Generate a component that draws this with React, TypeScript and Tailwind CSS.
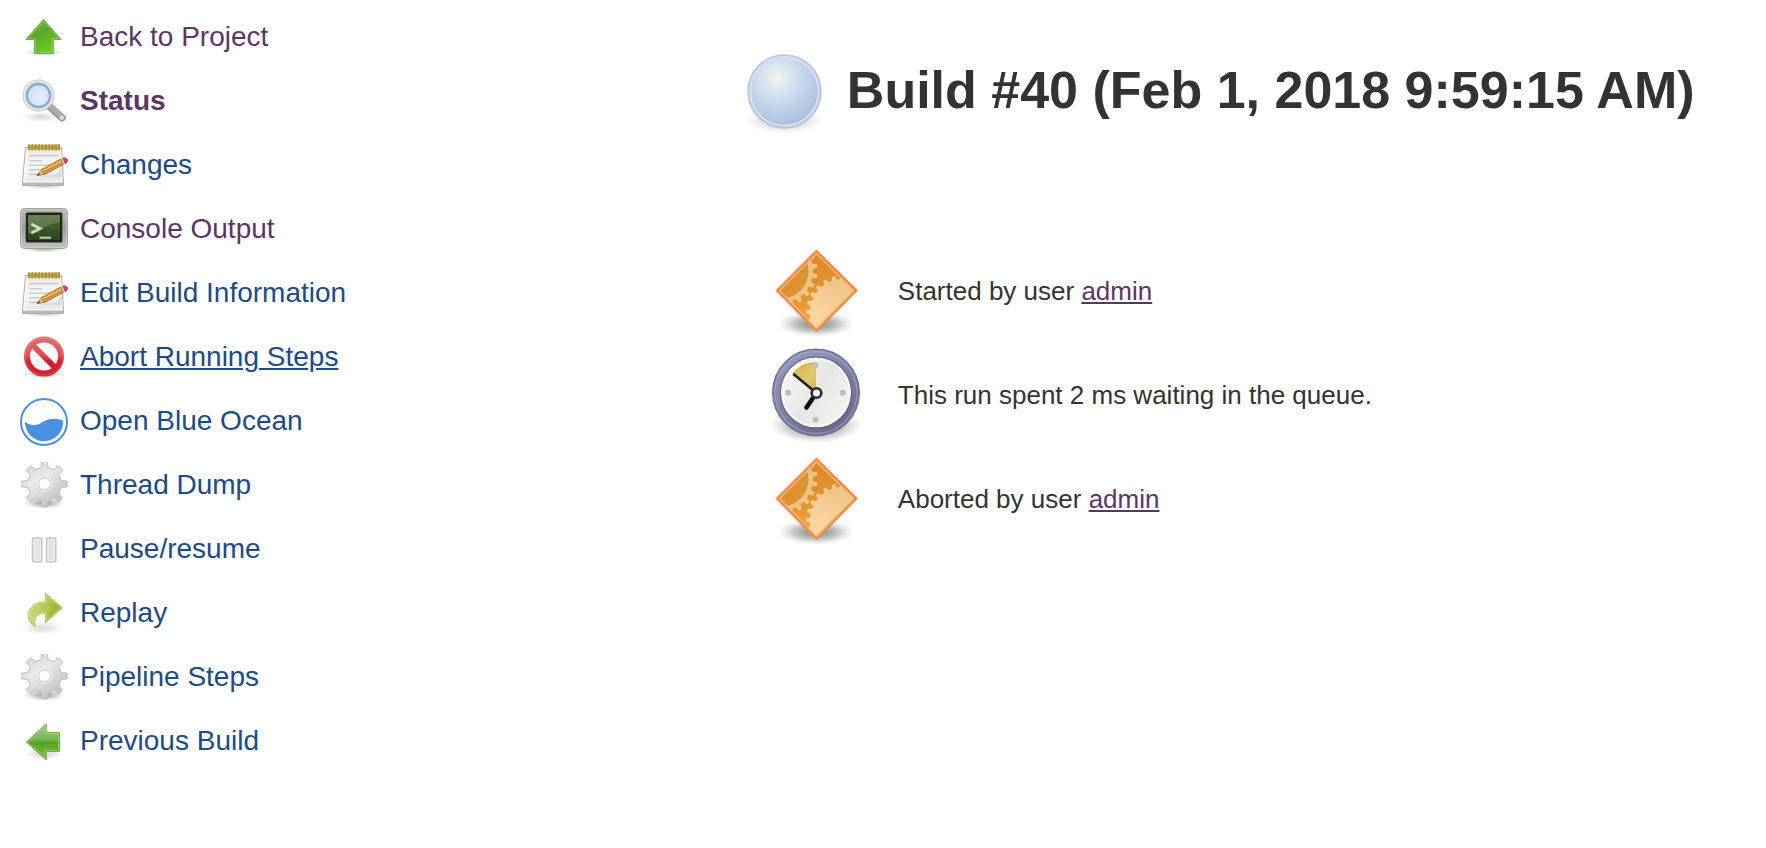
import React from 'react';

type Icon = () => React.ReactElement;

type Task = {
  label: string;
  icon: Icon;
  visited?: boolean;
  active?: boolean;
  hovered?: boolean;
};

type Cause = {
  text: string;
  user?: string;
  icon: Icon;
};

// toothed wheel outline, teeth start at the top
function gearPath(cx: number, cy: number, inner: number, outer: number, teeth: number, base = 0.5, tip = 0.36) {
  const step = (Math.PI * 2) / teeth;
  const point = (r: number, a: number) =>
    `${(cx + r * Math.sin(a)).toFixed(2)} ${(cy - r * Math.cos(a)).toFixed(2)}`;
  const parts: string[] = [];
  for (let i = 0; i < teeth; i++) {
    const a = i * step;
    parts.push(point(inner, a - (step * base) / 2));
    parts.push(point(outer, a - (step * tip) / 2));
    parts.push(point(outer, a + (step * tip) / 2));
    parts.push(point(inner, a + (step * base) / 2));
  }
  return `M${parts.join('L')}Z`;
}

function Shadow({ cx, cy, rx, ry, opacity = 0.4 }: { cx: number; cy: number; rx: number; ry: number; opacity?: number }) {
  return (
    <>
      <defs>
        <radialGradient id="shadow">
          <stop offset="0" stopColor="#000" stopOpacity="0.7" />
          <stop offset="0.5" stopColor="#000" stopOpacity="0.38" />
          <stop offset="0.8" stopColor="#000" stopOpacity="0.12" />
          <stop offset="1" stopColor="#000" stopOpacity="0" />
        </radialGradient>
      </defs>
      <ellipse cx={cx} cy={cy} rx={rx} ry={ry} fill="url(#shadow)" opacity={opacity} />
    </>
  );
}

function SmallIcon({ children }: { children: React.ReactNode }) {
  return (
    <svg viewBox="0 0 48 48" className="size-12 shrink-0" aria-hidden="true">
      {children}
    </svg>
  );
}

function UpIcon() {
  return (
    <SmallIcon>
      <defs>
        <linearGradient id="up" x1="0" y1="0" x2="0.5" y2="1">
          <stop offset="0" stopColor="#8cc063" />
          <stop offset="0.45" stopColor="#5da52a" />
          <stop offset="1" stopColor="#6fcb22" />
        </linearGradient>
      </defs>
      <Shadow cx={24} cy={38.5} rx={20} ry={4} opacity={0.35} />
      <path d="M23.5 5.5L41 25.5H33.3V39.5H14.5V25.5H6Z" fill="url(#up)" stroke="#6aad42" strokeWidth="1" strokeLinejoin="round" />
      <path d="M23.5 7.5L38.5 24.5H32.3V38.5H15.5V24.5H8.3Z" fill="none" stroke="#a5dc7c" strokeOpacity="0.5" />
    </SmallIcon>
  );
}

function SearchIcon() {
  return (
    <SmallIcon>
      <defs>
        <radialGradient id="lens" cx="0.55" cy="0.6" r="0.6">
          <stop offset="0" stopColor="#e8f0fa" />
          <stop offset="0.65" stopColor="#cfdff2" />
          <stop offset="1" stopColor="#a5c3e6" />
        </radialGradient>
      </defs>
      <Shadow cx={21} cy={39} rx={20} ry={5.5} opacity={0.22} />
      <path d="M29.5 28.5L42 39.7" stroke="#9a9a9a" strokeWidth="7.5" strokeLinecap="round" />
      <path d="M30 28L42 39" stroke="#adadad" strokeWidth="4.5" strokeLinecap="round" />
      <circle cx="41.8" cy="39.7" r="2.6" fill="#ddd" stroke="#999" strokeWidth="0.8" />
      <circle cx="18.5" cy="17.5" r="14" fill="url(#lens)" stroke="#c2c2c2" strokeWidth="4" />
      <circle cx="18.5" cy="17.5" r="14" fill="none" stroke="#e5e5e3" strokeWidth="2.4" />
      <circle cx="18.5" cy="17.5" r="11.6" fill="none" stroke="#86abd9" strokeWidth="2.2" />
      <path d="M9 18C9 10 15 7 22 8C27 10 28 13 28 15C21 14 15 19 9 18Z" fill="#fff" opacity="0.15" />
    </SmallIcon>
  );
}

function NotepadIcon() {
  return (
    <SmallIcon>
      <defs>
        <linearGradient id="paper" x1="0" y1="0" x2="0" y2="1">
          <stop offset="0" stopColor="#e8e8e7" />
          <stop offset="0.5" stopColor="#f6f6f5" />
          <stop offset="1" stopColor="#e4e4e2" />
        </linearGradient>
      </defs>
      <Shadow cx={24} cy={43.5} rx={22} ry={3.5} opacity={0.4} />
      <path d="M5.5 5.5H41.5L43.5 40V43.5H2.5V40Z" fill="url(#paper)" stroke="#adadab" strokeLinejoin="round" />
      <path d="M3 40.5H43.2V43H3Z" fill="#b9b9b6" />
      <path d="M6.5 8H40.7L42.3 39.7H3.8Z" fill="none" stroke="#fff" strokeWidth="0.8" />
      <path d="M9.5 13.7H38.5M9.5 18.7H22M9 23.3H33M9 27.8H22M9 32.4H19" stroke="#cdcdcc" strokeWidth="1.6" />
      <path d="M8 3H40V7.8H8Z" fill="#c2a443" />
      <path d="M8.8 2V8.4M12.2 2V8.4M15.6 2V8.4M19 2V8.4M22.4 2V8.4M25.8 2V8.4M29.2 2V8.4M32.6 2V8.4M36 2V8.4M39.2 2V8.4" stroke="#b09439" strokeWidth="1.7" />
      <path d="M18 35L36 32L44 22L42 36Z" fill="#888" opacity="0.18" />
      <path d="M16.8 33.6L22 27.2L24.8 32.4Z" fill="#dcc08a" stroke="#8a642b" strokeWidth="0.7" strokeLinejoin="round" />
      <path d="M16.8 33.6L19 31L20.2 32.9Z" fill="#5c5034" />
      <path d="M22 27.2L40.8 17L43.4 22.5L24.8 32.4Z" fill="#d0943e" stroke="#9c6c26" strokeWidth="0.8" />
      <path d="M22.8 28.8L41.3 18.8" stroke="#ebbd6c" strokeWidth="1.5" />
      <path d="M40.8 17L43 16L45.4 21.4L43.4 22.5Z" fill="#c9c9c9" stroke="#999" strokeWidth="0.5" />
      <path d="M43 16Q46.4 15.1 47.4 17.6T45.4 21.4Z" fill="#dc4545" stroke="#b13f37" strokeWidth="0.7" />
    </SmallIcon>
  );
}

function TerminalIcon() {
  return (
    <SmallIcon>
      <defs>
        <linearGradient id="bezel" x1="0" y1="0" x2="0" y2="1">
          <stop offset="0" stopColor="#b8bab4" />
          <stop offset="0.5" stopColor="#9c9e99" />
          <stop offset="1" stopColor="#c0c2bd" />
        </linearGradient>
        <linearGradient id="screen" x1="0" y1="0" x2="0" y2="1">
          <stop offset="0" stopColor="#4f6a3b" />
          <stop offset="1" stopColor="#2a431c" />
        </linearGradient>
      </defs>
      <Shadow cx={24} cy={42.5} rx={22} ry={4} opacity={0.5} />
      <path d="M4.5 2.5H43.5Q47.2 2.5 47.3 6L47.5 37Q47.5 42.5 43 42.5H5Q0.5 42.5 0.5 37L0.7 6Q0.8 2.5 4.5 2.5Z" fill="url(#bezel)" stroke="#a0a29d" />
      <path d="M4.8 3.6H43.2Q46.1 3.6 46.2 6.3L46.3 37Q46.3 41.3 42.8 41.3H5.2Q1.7 41.3 1.7 37L1.8 6.3Q1.9 3.6 4.8 3.6Z" fill="none" stroke="#d9dbd7" strokeOpacity="0.6" />
      <rect x="5.8" y="6.5" width="36.5" height="30" rx="1.5" fill="#20241d" />
      <rect x="8" y="9" width="32" height="25" fill="url(#screen)" />
      <path d="M8 9H40V16Q26 18 18 27Q13 26 8 28Z" fill="#a6bd8c" opacity="0.3" />
      <path d="M11.3 18L20 22.5L11.3 27" fill="none" stroke="#cfe0cc" strokeWidth="2.6" />
      <path d="M19.5 31.7H31" stroke="#a9c0a3" strokeWidth="2.4" />
      <circle cx="32.8" cy="39" r="1.2" fill="#8fdc50" />
    </SmallIcon>
  );
}

function StopIcon() {
  return (
    <SmallIcon>
      <defs>
        <linearGradient id="stop" gradientUnits="userSpaceOnUse" x1="0" y1="2" x2="0" y2="43">
          <stop offset="0" stopColor="#e67070" />
          <stop offset="0.5" stopColor="#dc4b50" />
          <stop offset="0.6" stopColor="#d5202b" />
          <stop offset="1" stopColor="#d2222c" />
        </linearGradient>
      </defs>
      <Shadow cx={24} cy={40} rx={20} ry={4.5} opacity={0.45} />
      <circle cx="24" cy="22.5" r="16.5" fill="#fff" />
      <path d="M12.5 11L35.5 34" stroke="url(#stop)" strokeWidth="6" />
      <circle cx="24" cy="22.5" r="17" fill="none" stroke="url(#stop)" strokeWidth="6" />
      <circle cx="24" cy="22.5" r="18.6" fill="none" stroke="#fff" strokeWidth="0.8" opacity="0.25" />
    </SmallIcon>
  );
}

function OceanIcon() {
  return (
    <SmallIcon>
      <circle cx="24" cy="24" r="23" fill="#fff" stroke="#4a90e2" strokeWidth="2" />
      <path d="M4.9 23.6C9 27.6 16 28.2 22 24.4C28 20.5 35 19.5 43.1 22.4A19.2 19.2 0 0 1 24 43.2A19.2 19.2 0 0 1 4.9 23.6Z" fill="#4a90e2" />
    </SmallIcon>
  );
}

function GearIcon() {
  return (
    <SmallIcon>
      <defs>
        <linearGradient id="gear" x1="0.1" y1="0" x2="0.8" y2="1">
          <stop offset="0" stopColor="#d2d2d2" />
          <stop offset="0.4" stopColor="#e9e9e9" />
          <stop offset="1" stopColor="#bdbdbd" />
        </linearGradient>
      </defs>
      <Shadow cx={24.5} cy={41} rx={20} ry={6} opacity={0.55} />
      <path
        d={`${gearPath(24.5, 22, 17, 22.8, 8, 0.5, 0.34)}M30.5 22A6 6 0 1 0 18.5 22A6 6 0 1 0 30.5 22Z`}
        fill="url(#gear)"
        fillRule="evenodd"
        stroke="#bababa"
        strokeLinejoin="round"
      />
      <circle cx="24.5" cy="22" r="6" fill="#fff" stroke="#c6c6c6" />
      <circle cx="24.5" cy="22" r="7.3" fill="none" stroke="#efefef" strokeWidth="1.2" />
    </SmallIcon>
  );
}

function PauseIcon() {
  return (
    <SmallIcon>
      <g fill="#e2e4e0" stroke="#c4c6c1" strokeWidth="1.6">
        <rect x="12.6" y="12" width="9.2" height="23.8" rx="1" />
        <rect x="26.6" y="12" width="9.2" height="23.8" rx="1" />
      </g>
      <path d="M14 13.5H20.5V34.5H14ZM28 13.5H34.5V34.5H28Z" fill="none" stroke="#eff0ee" />
    </SmallIcon>
  );
}

function ReplayIcon() {
  return (
    <SmallIcon>
      <defs>
        <linearGradient id="replay" x1="0" y1="0" x2="1" y2="0.2">
          <stop offset="0" stopColor="#cfdc80" />
          <stop offset="0.5" stopColor="#bacb62" />
          <stop offset="1" stopColor="#9aae25" />
        </linearGradient>
      </defs>
      <Shadow cx={23} cy={38} rx={22} ry={7} opacity={0.2} />
      <path
        d="M25.3 3L42.3 17.7L25.3 33V23.5C18 22.5 12.5 28 15.5 36.5C8.5 34.5 6.5 25 9.5 20C12.5 14.5 18 11.5 25.3 12Z"
        fill="url(#replay)"
        stroke="#b9c66c"
        strokeLinejoin="round"
      />
      <path d="M26.3 5.5L40.5 17.7L26.3 30.5V22.5C19 21.5 13 25 13 32C9.5 28 9 23 11.5 19.5C15 14.5 20 12.6 26.3 13Z" fill="none" stroke="#dce7a2" strokeOpacity="0.5" />
    </SmallIcon>
  );
}

function LeftIcon() {
  return (
    <SmallIcon>
      <defs>
        <linearGradient id="left" x1="0" y1="0" x2="0" y2="1">
          <stop offset="0" stopColor="#a1cb83" />
          <stop offset="0.42" stopColor="#7fb559" />
          <stop offset="0.52" stopColor="#57a421" />
          <stop offset="1" stopColor="#76c639" />
        </linearGradient>
      </defs>
      <Shadow cx={24} cy={35.5} rx={20} ry={7} opacity={0.25} />
      <path d="M6.3 24L26.3 6V14.5H39.5V33.5H26.3V42Z" fill="url(#left)" stroke="#70ab4b" strokeLinejoin="round" />
      <path d="M8.2 24L25.3 8.5V15.5H38.5V32.5H25.3V39.5Z" fill="none" stroke="#b5df96" strokeOpacity="0.5" />
    </SmallIcon>
  );
}

function BallIcon() {
  return (
    <svg viewBox="0 0 80 80" className="size-20 shrink-0 overflow-visible" aria-hidden="true">
      <defs>
        <radialGradient id="ball" cx="0.4" cy="0.32" r="0.7">
          <stop offset="0" stopColor="#f1f5ea" />
          <stop offset="0.3" stopColor="#d5e2f0" />
          <stop offset="0.7" stopColor="#b9cce4" />
          <stop offset="1" stopColor="#abbbd9" />
        </radialGradient>
      </defs>
      <Shadow cx={40} cy={71} rx={40} ry={13} opacity={0.3} />
      <circle cx="40.5" cy="41.5" r="36.5" fill="url(#ball)" stroke="#b8c7df" strokeWidth="1.6" />
      <circle cx="40.5" cy="41.5" r="34.2" fill="none" stroke="#d6e1f0" strokeWidth="2" />
    </svg>
  );
}

function CauseIcon() {
  return (
    <svg viewBox="0 0 96 96" className="size-24 shrink-0" aria-hidden="true">
      <defs>
        <linearGradient id="sign" x1="0.2" y1="0" x2="0.5" y2="1">
          <stop offset="0" stopColor="#d88a28" />
          <stop offset="0.5" stopColor="#e1922d" />
          <stop offset="1" stopColor="#f9ac42" />
        </linearGradient>
        <linearGradient id="wheel" gradientUnits="userSpaceOnUse" x1="70" y1="35" x2="50" y2="85">
          <stop offset="0" stopColor="#efc388" />
          <stop offset="1" stopColor="#fdd9a8" />
        </linearGradient>
        <clipPath id="signInside">
          <path d="M48.5 8.5L86.5 46.5L48.5 84.5L10.5 46.5Z" />
        </clipPath>
      </defs>
      <Shadow cx={48} cy={80} rx={38} ry={13} opacity={0.7} />
      <path d="M48.5 7L88.5 46.5L48.5 87L9 46.5Z" fill="url(#sign)" />
      <g clipPath="url(#signInside)">
        <path d={gearPath(13, 27, 32, 36.5, 22, 0.6, 0.35)} fill="#edc083" />
        <circle cx="13" cy="27" r="27.5" fill="#df912f" />
        <path d={gearPath(75, 68, 33, 37, 24, 0.6, 0.35)} fill="url(#wheel)" />
      </g>
      <path d="M48.5 9.8L85.5 46.5L48.5 84L11.5 46.5Z" fill="none" stroke="#f5bd7a" strokeWidth="1.2" />
      <path d="M48.5 7L88.5 46.5L48.5 87L9 46.5Z" fill="none" stroke="#ee8d4c" strokeWidth="2.4" strokeLinejoin="round" />
    </svg>
  );
}

function ClockIcon() {
  return (
    <svg viewBox="0 0 96 96" className="size-24 shrink-0" aria-hidden="true">
      <defs>
        <linearGradient id="rim" x1="0.2" y1="0" x2="0.8" y2="1">
          <stop offset="0" stopColor="#9498b8" />
          <stop offset="0.5" stopColor="#7f80a6" />
          <stop offset="1" stopColor="#6b6688" />
        </linearGradient>
        <linearGradient id="face" x1="0" y1="0.2" x2="1" y2="0.8">
          <stop offset="0" stopColor="#fafafa" />
          <stop offset="0.5" stopColor="#e6e6e4" />
          <stop offset="1" stopColor="#f7f7f6" />
        </linearGradient>
        <linearGradient id="wedge" x1="0" y1="0" x2="1" y2="1">
          <stop offset="0" stopColor="#d9b63e" />
          <stop offset="0.6" stopColor="#e0c873" />
          <stop offset="1" stopColor="#d5b443" />
        </linearGradient>
      </defs>
      <Shadow cx={48} cy={77} rx={46} ry={18} opacity={0.75} />
      <circle cx="48" cy="44.5" r="39" fill="url(#face)" stroke="url(#rim)" strokeWidth="9" />
      <circle cx="48" cy="44.5" r="43.2" fill="none" stroke="#75749a" strokeWidth="1.6" />
      <circle cx="48" cy="44.5" r="41" fill="none" stroke="#a9abc8" strokeWidth="1.3" opacity="0.6" />
      <circle cx="48" cy="44.5" r="35.8" fill="none" stroke="#5e5a7c" strokeWidth="1.4" opacity="0.5" />
      <circle cx="48" cy="44.5" r="34" fill="none" stroke="#fff" strokeWidth="1.6" />
      <path d="M48 44.5V14.5C38 14.5 30.5 18.5 24.8 25.8Z" fill="url(#wedge)" />
      <path d="M25.3 25.2C31 18.5 38.5 15.1 47.5 15" fill="none" stroke="#cfa835" />
      <g fill="#bac0b5">
        <circle cx="47.5" cy="17.3" r="3" />
        <circle cx="20.2" cy="44.7" r="3" />
        <circle cx="74.8" cy="44.7" r="3" />
        <circle cx="47.5" cy="71.8" r="3" />
      </g>
      <path d="M46 43L26 26.5" stroke="#222" strokeWidth="2.6" strokeLinecap="round" />
      <path d="M46 48.5L38.5 59.5" stroke="#111" strokeWidth="4.6" strokeLinecap="round" />
      <circle cx="48.5" cy="45" r="4.8" fill="#f4f4f4" stroke="#2a2a2a" strokeWidth="2.6" />
    </svg>
  );
}

const tasks: Task[] = [
  { label: 'Back to Project', icon: UpIcon, visited: true },
  { label: 'Status', icon: SearchIcon, visited: true, active: true },
  { label: 'Changes', icon: NotepadIcon },
  { label: 'Console Output', icon: TerminalIcon, visited: true },
  { label: 'Edit Build Information', icon: NotepadIcon },
  { label: 'Abort Running Steps', icon: StopIcon, hovered: true },
  { label: 'Open Blue Ocean', icon: OceanIcon },
  { label: 'Thread Dump', icon: GearIcon },
  { label: 'Pause/resume', icon: PauseIcon },
  { label: 'Replay', icon: ReplayIcon },
  { label: 'Pipeline Steps', icon: GearIcon },
  { label: 'Previous Build', icon: LeftIcon },
];

const causes: Cause[] = [
  { text: 'Started by user', user: 'admin', icon: CauseIcon },
  { text: 'This run spent 2 ms waiting in the queue.', icon: ClockIcon },
  { text: 'Aborted by user', user: 'admin', icon: CauseIcon },
];

function TaskLink({ task }: { task: Task }) {
  const TaskIcon = task.icon;
  return (
    <a href="#" className={`flex h-16 items-center gap-3 ${task.visited ? 'text-[#5c3566]' : 'text-[#204a87]'}`}>
      <TaskIcon />
      <span className={`pb-0.5 ${task.active ? 'font-bold' : ''} ${task.hovered ? 'underline' : ''}`}>{task.label}</span>
    </a>
  );
}

export default function App() {
  return (
    <div className="flex min-h-screen bg-white font-['Liberation_Sans',Arial,sans-serif] text-[#333]">
      <nav className="w-5/12 shrink-0 pt-[6px] pl-5 text-[28px] leading-8">
        <ul>
          {tasks.map(task => (
            <li key={task.label}>
              <TaskLink task={task} />
            </li>
          ))}
        </ul>
      </nav>
      <main className="min-w-0 flex-1 pt-[50px] pl-2">
        <h1 className="flex items-center gap-[23px] text-[52px] leading-[80px] font-bold whitespace-nowrap">
          <BallIcon />
          Build #40 (Feb 1, 2018 9:59:15 AM)
        </h1>
        <ul className="mt-[110px] pl-6 text-[26px] leading-8">
          {causes.map(cause => {
            const RowIcon = cause.icon;
            return (
              <li key={cause.text} className="flex h-[104px] items-center gap-[34px]">
                <RowIcon />
                <p className="pb-0.5">
                  {cause.text}
                  {cause.user && (
                    <>
                      {' '}
                      <a href="#" className="text-[#5c3566] underline">{cause.user}</a>
                    </>
                  )}
                </p>
              </li>
            );
          })}
        </ul>
      </main>
    </div>
  );
}
